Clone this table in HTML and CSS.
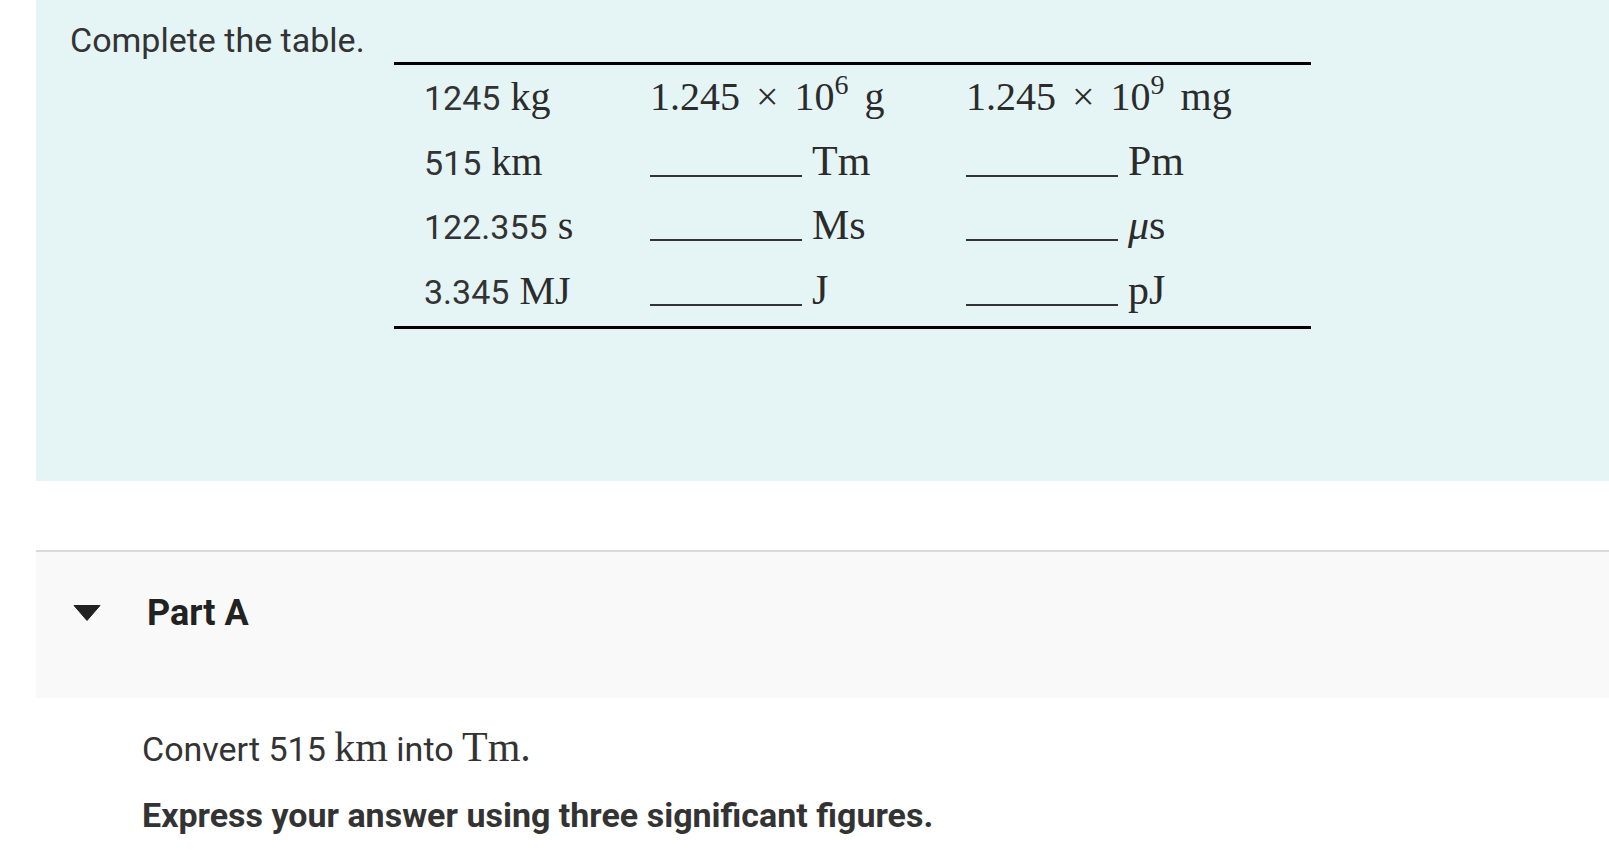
FILE: index.html
```html
<!DOCTYPE html>
<html lang="en">
<head>
<meta charset="utf-8">
<title>Complete the table</title>
<link rel="stylesheet" href="styles.css">
</head>
<body>
<main class="page">
  <section class="intro">
    <p class="intro-text">Complete the table.</p>
    <div class="units-table">
      <div class="cell c1"><span class="r">1245</span> kg</div>
      <div class="cell">1.245<span class="times">×</span>10<span class="sup">6</span><span class="unit-gap">g</span></div>
      <div class="cell">1.245<span class="times">×</span>10<span class="sup">9</span><span class="unit-gap">mg</span></div>

      <div class="cell c1"><span class="r">515</span> km</div>
      <div class="cell"><span class="blank"></span><span class="u">Tm</span></div>
      <div class="cell"><span class="blank"></span><span class="u">Pm</span></div>

      <div class="cell c1"><span class="r">122.355</span> s</div>
      <div class="cell"><span class="blank"></span><span class="u">Ms</span></div>
      <div class="cell"><span class="blank"></span><span class="u"><i>μ</i>s</span></div>

      <div class="cell c1"><span class="r">3.345</span> MJ</div>
      <div class="cell"><span class="blank"></span><span class="u">J</span></div>
      <div class="cell"><span class="blank"></span><span class="u">pJ</span></div>
    </div>
  </section>

  <section class="part">
    <header class="part-head">
      <svg class="caret" width="28" height="16" viewBox="0 0 28 16" aria-hidden="true">
        <polygon points="1,0.5 27,0.5 14,15.5" fill="#222" stroke="#222" stroke-width="1" stroke-linejoin="round"/>
      </svg>
      <h2 class="part-title">Part A</h2>
    </header>
    <div class="part-body">
      <p class="question">Convert 515 <span class="m">km</span> into <span class="m">Tm.</span></p>
      <p class="instruction">Express your answer using three significant figures.</p>
    </div>
  </section>
</main>
</body>
</html>
```

FILE: styles.css
```css
* { box-sizing: border-box; }

html, body {
  margin: 0;
  padding: 0;
  background: #ffffff;
}

body {
  font-family: Roboto, "Liberation Sans", Arial, sans-serif;
  color: #333333;
}

.page {
  margin-left: 36px;
}

.intro {
  display: flex;
  align-items: flex-start;
  background: #e5f5f6;
  min-height: 481px;
  padding: 20px 0 0 34px;
}

.intro-text {
  flex: 0 0 324px;
  margin: 0;
  font-size: 34px;
  line-height: 40px;
}

.units-table {
  margin-top: 42px;
  width: 917px;
  display: grid;
  grid-template-columns: 256px 316px 1fr;
  grid-auto-rows: 64.5px;
  border-top: 3px solid #000;
  border-bottom: 3px solid #000;
  padding-bottom: 3px;
  font-family: "Liberation Serif", "Times New Roman", serif;
  font-size: 40px;
  color: #2b2b2b;
}

.cell {
  line-height: 64.5px;
  white-space: nowrap;
}

.c1 {
  padding-left: 30px;
}

.r {
  font-family: Roboto, "Liberation Sans", Arial, sans-serif;
  font-size: 34px;
  line-height: 1;
  color: #333;
}

.u {
  font-size: 42px;
  line-height: 1;
}

.times {
  margin: 0 16px;
}

.sup {
  font-size: 28px;
  line-height: 0;
  vertical-align: 16px;
}

.unit-gap {
  margin-left: 16px;
}

.blank {
  display: inline-block;
  width: 152px;
  height: 0;
  border-bottom: 2.5px solid #333;
  margin-bottom: -2px;
  margin-right: 10px;
}

.part {
  margin-top: 69px;
}

.part-head {
  display: flex;
  align-items: center;
  height: 148px;
  padding: 0 0 24px 37px;
  background: #f9f9f9;
  border-top: 2px solid #d9d9d9;
}

.caret {
  flex: 0 0 auto;
  display: block;
}

.part-title {
  margin: 0 0 0 46px;
  font-size: 36px;
  font-weight: 700;
  line-height: 1;
  color: #222;
}

.part-body {
  padding: 26px 0 0 106px;
}

.question {
  margin: 0;
  font-size: 34px;
  line-height: 50px;
}

.m {
  font-family: "Liberation Serif", "Times New Roman", serif;
  font-size: 42px;
  line-height: 1;
}

.instruction {
  margin: 16px 0 0;
  font-size: 34px;
  font-weight: 700;
  line-height: 50px;
}
```
